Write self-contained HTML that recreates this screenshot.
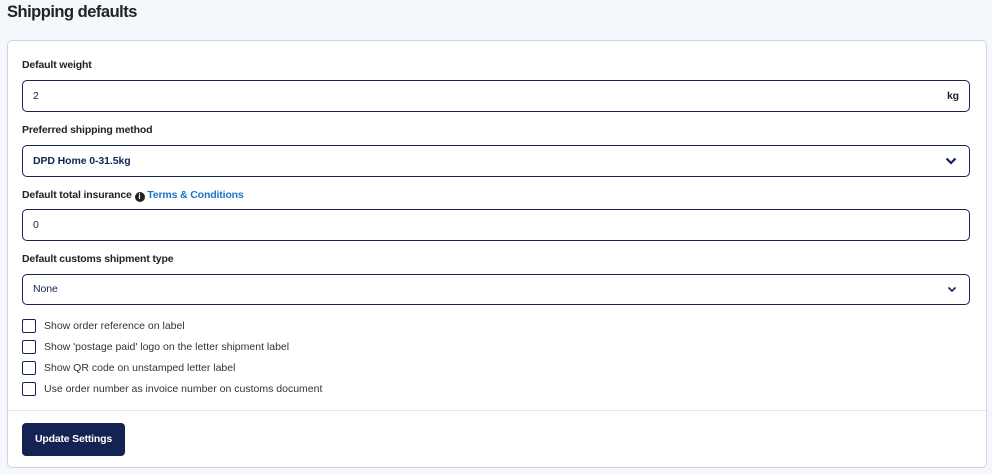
<!DOCTYPE html>
<html><head><style>
*{box-sizing:border-box;margin:0;padding:0}
body{width:992px;height:474px;background:#f4f8fd;font-family:"Liberation Sans",sans-serif;color:#1a1a1a;position:relative;overflow:hidden}
h1{position:absolute;left:7px;top:3px;font-size:16.5px;font-weight:bold;color:#222;letter-spacing:-0.5px}
.card{position:absolute;left:7px;top:40px;width:980px;height:428px;background:#fff;border:1px solid #cfd4da;border-radius:5px}
.lbl{position:absolute;left:22px;font-size:10.5px;font-weight:bold;color:#222;letter-spacing:-0.15px}
.inp{position:absolute;left:22px;width:948px;height:32px;border:1px solid #142452;border-radius:5px;font-size:10.5px;padding-left:10px;line-height:30px;color:#142452;letter-spacing:-0.1px}
.cb{position:absolute;left:22px;font-size:10.5px;color:#333;height:14px;line-height:14px;letter-spacing:0}
.cb span{display:inline-block;width:14px;height:14px;border:1px solid #142452;border-radius:2px;vertical-align:top;margin-right:8px}
.btn{position:absolute;left:22px;top:423px;width:103px;height:33px;background:#142452;color:#fff;border-radius:4px;font-size:10.5px;font-weight:bold;text-align:center;line-height:33px;letter-spacing:-0.2px}
</style></head><body>
<h1>Shipping defaults</h1>
<div class="card"></div>
<div class="lbl" style="top:59px">Default weight</div>
<div class="inp" style="top:80px;color:#222">2<b style="position:absolute;right:10px;color:#222">kg</b></div>
<div class="lbl" style="top:124px">Preferred shipping method</div>
<div class="inp" style="top:145px;font-weight:bold">DPD Home 0-31.5kg<svg style="position:absolute;right:12px;top:11px" width="12" height="8" viewBox="0 0 12 8"><path d="M1.5 1.5L6 6l4.5-4.5" stroke="#142452" stroke-width="2.2" fill="none"/></svg></div>
<div class="lbl" style="top:189px">Default total insurance <span style="display:inline-block;width:10px;height:10px;border-radius:50%;background:#222;color:#fff;font-size:8px;text-align:center;line-height:10px;vertical-align:-1px;letter-spacing:0">i</span> <span style="color:#1a73c8">Terms &amp; Conditions</span></div>
<div class="inp" style="top:209px;color:#222">0</div>
<div class="lbl" style="top:253px">Default customs shipment type</div>
<div class="inp" style="top:274px;height:31px;line-height:29px">None<svg style="position:absolute;right:12px;top:11px" width="10" height="7" viewBox="0 0 10 7"><path d="M1.5 1.5L5 5l3.5-3.5" stroke="#142452" stroke-width="1.6" fill="none"/></svg></div>
<div class="cb" style="top:319px"><span></span>Show order reference on label</div>
<div class="cb" style="top:340px"><span></span>Show 'postage paid' logo on the letter shipment label</div>
<div class="cb" style="top:361px"><span></span>Show QR code on unstamped letter label</div>
<div class="cb" style="top:382px"><span></span>Use order number as invoice number on customs document</div>
<div style="position:absolute;left:8px;top:410px;width:978px;height:1px;background:#e2e5e9"></div>
<div class="btn">Update Settings</div>
</body></html>
